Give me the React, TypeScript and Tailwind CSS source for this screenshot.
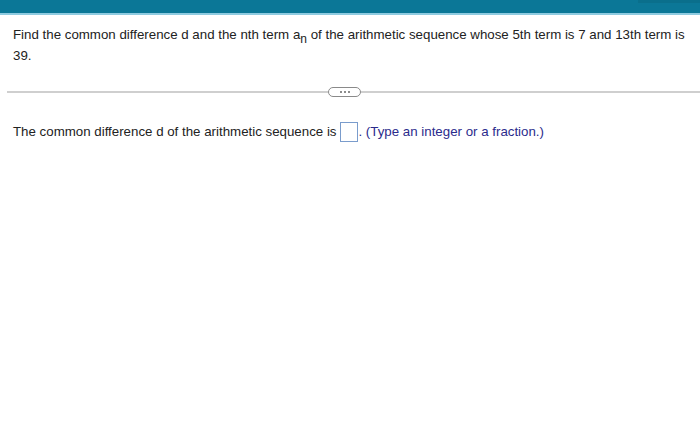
export default function App() {
  return (
    <div className="w-[700px] h-[421px] bg-white font-['Liberation_Sans',Arial,sans-serif] text-[13.3px] text-[#222]">
      {/* Header bar */}
      <div className="h-[13px] bg-[#0b7797] flex justify-end">
        <div className="w-[62px] h-[3px] bg-[#0a6f8c]" />
      </div>
      <div className="h-[2px] bg-[#8fcbe0]" />

      {/* Question */}
      <div className="px-[13px] pt-[9px] leading-[21px]">
        Find the common difference d and the nth term a
        <span className="inline-block text-[12px] leading-none translate-y-[4px]">n</span> of the arithmetic sequence whose 5th term is 7 and 13th term is 39.
      </div>

      {/* Divider with pill */}
      <div className="flex items-center pl-[7px] mt-[21px]">
        <div className="w-[321px] h-[2px] bg-[#cfcfcf]" />
        <div className="w-[33px] h-[10px] rounded-full border border-[#8a8a8a] bg-white flex items-center justify-center gap-[2px]">
          <span className="w-[2px] h-[2px] rounded-full bg-[#666]" />
          <span className="w-[2px] h-[2px] rounded-full bg-[#666]" />
          <span className="w-[2px] h-[2px] rounded-full bg-[#666]" />
        </div>
        <div className="flex-1 h-[2px] bg-[#cfcfcf]" />
      </div>

      {/* Answer */}
      <div className="flex items-center px-[13px] mt-[25px]">
        <span>The common difference d of the arithmetic sequence is</span>
        <span className="ml-[4px] w-[18px] h-[20px] border border-[#7a9ccc] bg-white" />
        <span className="text-[#2b2b8c]">. (Type an integer or a fraction.)</span>
      </div>
    </div>
  );
}
